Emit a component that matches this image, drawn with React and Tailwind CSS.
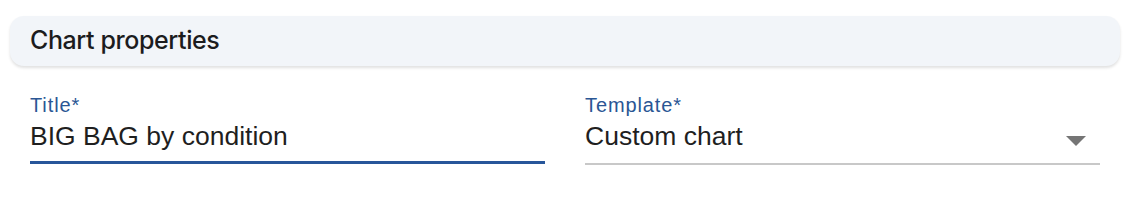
export default function App() {
  return (
    <div className="w-[1148px] h-[200px] bg-white font-['Liberation_Sans',sans-serif] pt-[16px]">
      <div className="ml-[10px] w-[1110px] h-[50px] rounded-[14px] bg-[#f2f5f9] shadow-[0_2px_3px_rgba(0,0,0,0.12)] flex items-center pl-[20px]">
        <h2 className="font-['Inter',sans-serif] text-[25px] font-medium text-[#1c1c1e] tracking-[-0.4px]">Chart properties</h2>
      </div>

      <div className="grid grid-cols-2 gap-[40px] px-[30px] mt-[27px] w-[1130px]">
        <div className="flex flex-col">
          <label className="text-[20px] leading-[24px] text-[#2a5694] tracking-[0.9px]">Title*</label>
          <div className="text-[26.5px] leading-[32px] text-[#1f1f1f] mt-[3px]">BIG BAG by condition</div>
          <div className="h-[3px] bg-[#27569a] mt-[9px]" />
        </div>
        <div className="flex flex-col">
          <label className="text-[20px] leading-[24px] text-[#2a5694] tracking-[0.9px]">Template*</label>
          <div className="flex items-center justify-between mt-[3px]">
            <span className="text-[26.5px] leading-[32px] text-[#1f1f1f]">Custom chart</span>
            <svg width="20" height="10" viewBox="0 0 20 10" className="mr-[14px] mt-[10px]">
              <path d="M0 0 L20 0 L10 10 Z" fill="#757575" />
            </svg>
          </div>
          <div className="h-[2px] bg-[#c8c8c8] mt-[11px]" />
        </div>
      </div>
    </div>
  );
}
